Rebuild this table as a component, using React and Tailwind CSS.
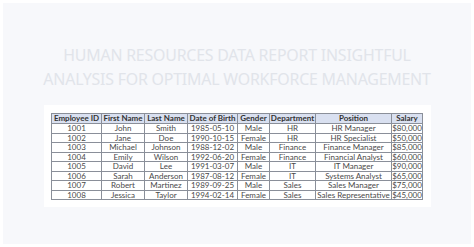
import React from 'react';

const rows = [
  ['1001', 'John', 'Smith', '1985-05-10', 'Male', 'HR', 'HR Manager', '$80,000'],
  ['1002', 'Jane', 'Doe', '1990-10-15', 'Female', 'HR', 'HR Specialist', '$50,000'],
  ['1003', 'Michael', 'Johnson', '1988-12-02', 'Male', 'Finance', 'Finance Manager', '$85,000'],
  ['1004', 'Emily', 'Wilson', '1992-06-20', 'Female', 'Finance', 'Financial Analyst', '$60,000'],
  ['1005', 'David', 'Lee', '1991-03-07', 'Male', 'IT', 'IT Manager', '$90,000'],
  ['1006', 'Sarah', 'Anderson', '1987-08-12', 'Female', 'IT', 'Systems Analyst', '$65,000'],
  ['1007', 'Robert', 'Martinez', '1989-09-25', 'Male', 'Sales', 'Sales Manager', '$75,000'],
  ['1008', 'Jessica', 'Taylor', '1994-02-14', 'Female', 'Sales', 'Sales Representative', '$45,000'],
];

const headers = ['Employee ID', 'First Name', 'Last Name', 'Date of Birth', 'Gender', 'Department', 'Position', 'Salary'];
const widths = ['w-[50px]', 'w-[43px]', 'w-[43px]', 'w-[50px]', 'w-[32px]', 'w-[46px]', 'w-[76px]', 'w-[31px]'];

const App = () => {
  return (
    <div className="w-[474px] h-[247px] bg-white p-[3px]">
      <div className="w-full h-full bg-[#f7f8fb] flex flex-col items-center">
        <div className="mt-[40px] text-center text-[15.9px] leading-[24px] text-[#e1e4ea] font-['Noto_Sans',sans-serif] tracking-[-0.2px]">
          <div>HUMAN RESOURCES DATA REPORT INSIGHTFUL</div>
          <div>ANALYSIS FOR OPTIMAL WORKFORCE MANAGEMENT</div>
        </div>
        <div className="mt-[14px] w-[387px] h-[102px] bg-white flex justify-center pt-[8px]">
          <table className="border-collapse font-['Lato',sans-serif] text-[8px] text-[#4a4a4a] table-fixed h-fit">
            <thead>
              <tr className="h-[10px] bg-[#d9e0f0]">
                {headers.map((h, i) => (
                  <th key={h} className={`${widths[i]} border border-[#8a8f99] font-bold leading-[9px] p-0 text-[#333]`}>{h}</th>
                ))}
              </tr>
            </thead>
            <tbody>
              {rows.map((r) => (
                <tr key={r[0]} className="h-[9.5px]">
                  {r.map((c, i) => (
                    <td key={i} className="border border-[#8a8f99] text-center leading-[8.5px] p-0">{c}</td>
                  ))}
                </tr>
              ))}
            </tbody>
          </table>
        </div>
      </div>
    </div>
  );
};

export default App;
